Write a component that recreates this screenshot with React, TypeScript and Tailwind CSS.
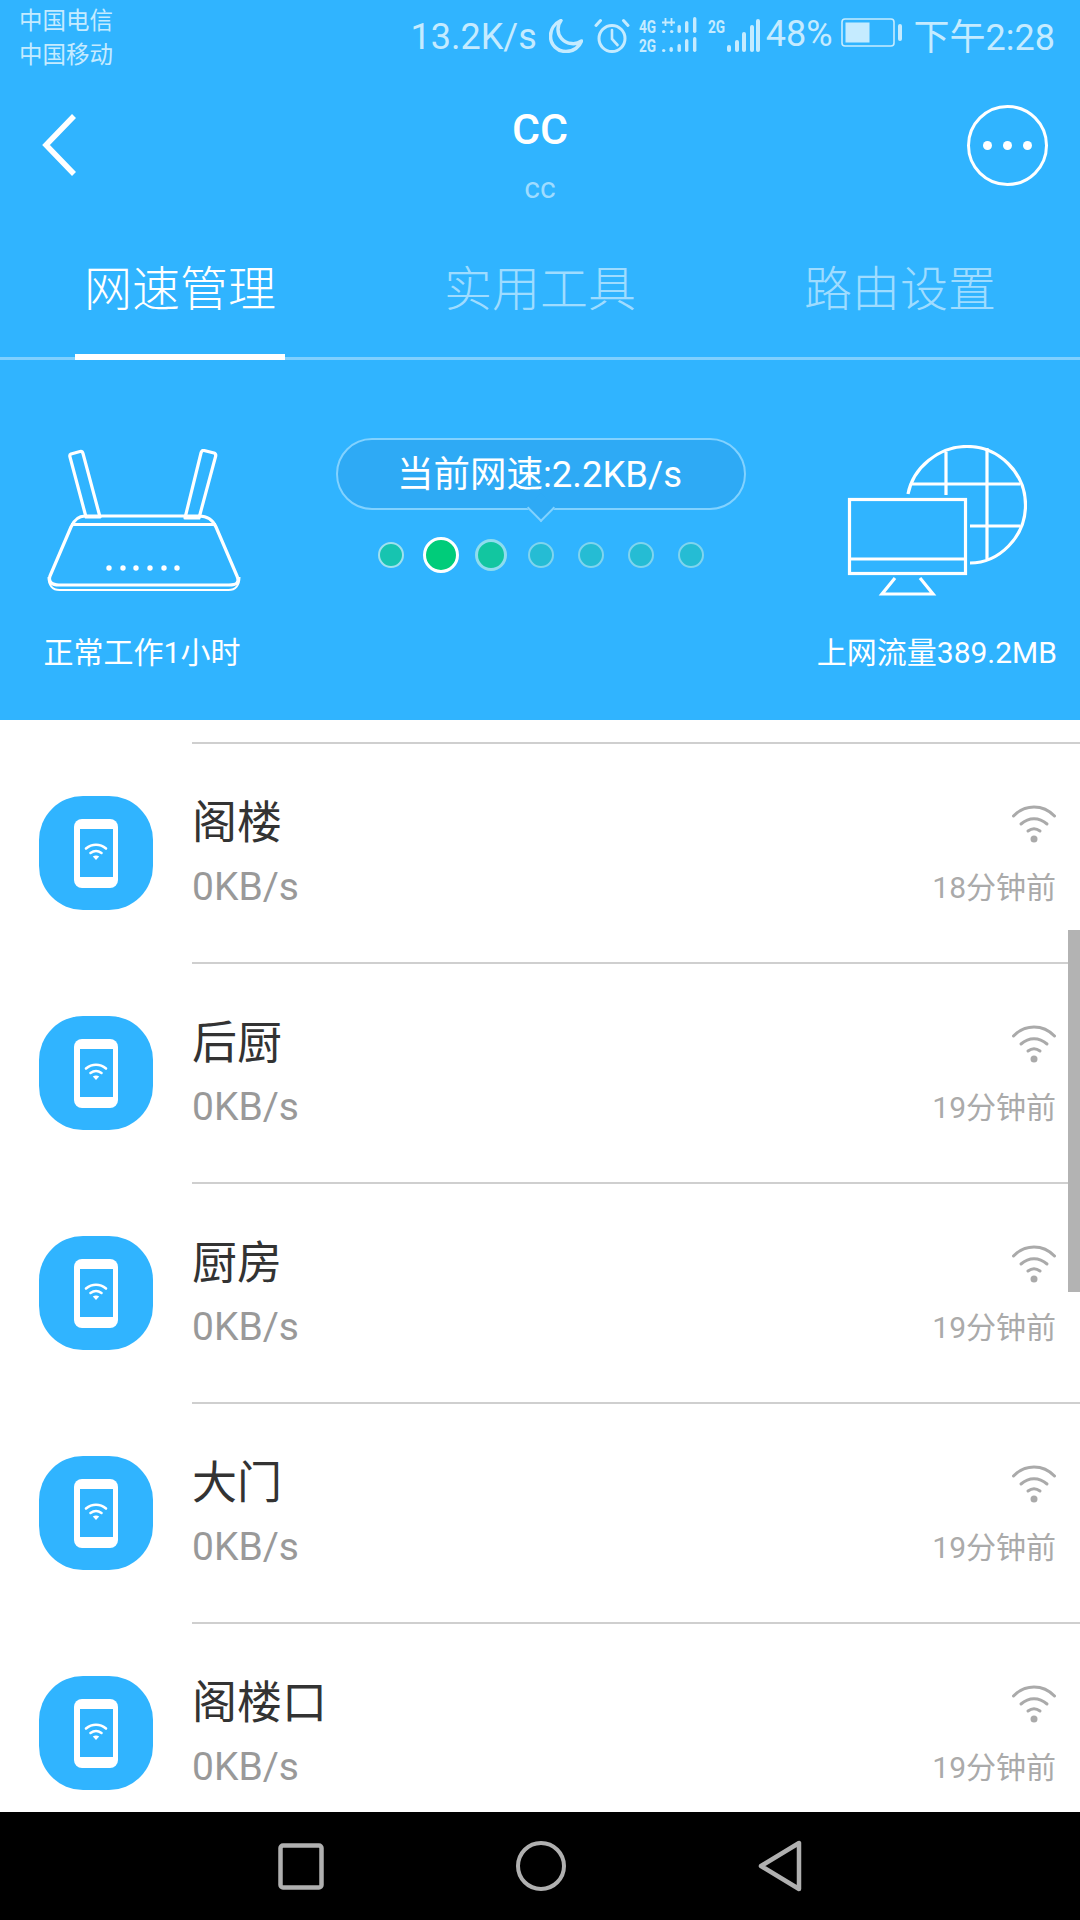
import React from "react";

const FONT = "font-['Roboto','Noto_Sans_CJK_SC',sans-serif]";

function Moon() {
  return (
    <svg width="34" height="34" viewBox="0 0 34 34" fill="none">
      <path d="M12 1.500C5.500 4.500 1.500 10.500 1.500 17c0 9 7 15.500 15.500 15.500 7.500 0 13.500-4.500 15.500-10.500-3 2.200-6.500 3-10 2.600C14 23.500 9 17 9 10.500 9 7 10 4 12 1.500Z" stroke="#c5ebff" strokeWidth="3.500" strokeLinejoin="round" />
    </svg>
  );
}

function Alarm() {
  return (
    <svg width="36" height="36" viewBox="0 0 36 36" fill="none" stroke="#c5ebff" strokeLinecap="round">
      <circle cx="18" cy="20.500" r="13" strokeWidth="3" />
      <path d="M18 12v9l5.500 6" strokeWidth="2.600" />
      <path d="M2 7.500 6.500 2.500M34 7.500 29.500 2.500" strokeWidth="3" />
    </svg>
  );
}

function Bar({ x, bottom, h, w = 3.400 }: { x: number; bottom: number; h: number; w?: number }) {
  return <rect x={x} y={bottom - h} width={w} height={h} rx={w / 2} fill="#c5ebff" />;
}

const netText = { fontFamily: "Roboto, sans-serif", fontWeight: 700, fontSize: 13, fill: "#c5ebff" };

function NetLabel({ y, children }: { y: number; children: string }) {
  return (
    <text transform={`translate(0 ${y}) scale(1.05 1.45)`} {...netText}>
      {children}
    </text>
  );
}

function DualNet() {
  return (
    <svg width="58" height="46" viewBox="0 -5 58 46">
      <NetLabel y={15}>4G</NetLabel>
      <NetLabel y={34}>2G</NetLabel>
      <path d="M23 4.500h13M26.500 0v8M32.500 0v8" stroke="#c5ebff" strokeWidth="1.800" fill="none" />
      <Bar x={23} bottom={15} h={3} />
      <Bar x={31} bottom={15} h={3} />
      <Bar x={38.500} bottom={15} h={8} />
      <Bar x={46} bottom={15} h={12} />
      <Bar x={54} bottom={15} h={16} />
      <Bar x={23} bottom={34} h={3} />
      <Bar x={30.500} bottom={34} h={5} />
      <Bar x={38.500} bottom={34} h={8} />
      <Bar x={46} bottom={34} h={13} />
      <Bar x={54} bottom={34} h={15} />
    </svg>
  );
}

function SingleNet() {
  return (
    <svg width="52" height="46" viewBox="0 -5 52 46">
      <NetLabel y={15}>2G</NetLabel>
      <Bar x={19} bottom={34} h={7} w={4} />
      <Bar x={27} bottom={34} h={12} w={4} />
      <Bar x={34} bottom={34} h={20} w={4} />
      <Bar x={42} bottom={34} h={27} w={4} />
      <Bar x={48} bottom={34} h={33} w={4} />
    </svg>
  );
}

function Battery() {
  return (
    <svg width="62" height="30" viewBox="0 0 62 30">
      <rect x="1" y="1" width="52" height="27" rx="3" fill="none" stroke="#c5ebff" strokeWidth="1.600" />
      <rect x="4.500" y="4.500" width="24" height="20" fill="#c5ebff" />
      <rect x="57" y="6" width="4" height="17" rx="2" fill="#c5ebff" />
    </svg>
  );
}

function Router() {
  return (
    <svg width="194" height="144" viewBox="0 0 194 144" fill="none" stroke="#fff" strokeWidth="3.200" strokeLinejoin="round">
      <path d="M24 5 33 2.500c1.500-.4 2.500.3 3 2L53 68H39L23 8c-.5-1.500 0-2.500 1-3Z" />
      <path d="M157 1.500 167 4c1.500.5 2 1.500 1.700 3L152 69H138L154 4c.4-1.600 1.500-2.900 3-2.500Z" />
      <path d="M38 67H152c8 0 14 4 17 11L190 127c3 7-1 9-8 9H12c-7 0-11-3-9-9L24 78c3-7 8-11 14-11Z" />
      <path d="M24 75.500H169" />
      <path d="M1.500 128c0 8 4 13 11 13h169c7 0 11-5 11-13" strokeWidth="2" />
      <g fill="#fff" stroke="none">
        {[62, 76, 89, 103, 117, 130].map((x) => (
          <circle key={x} cx={x} cy={119} r="2.700" />
        ))}
      </g>
    </svg>
  );
}

function GlobeMonitor() {
  return (
    <svg width="180" height="152" viewBox="0 0 180 152" fill="none" stroke="#fff" strokeWidth="3.200">
      <path d="M61 49C66 23 91 1.500 120 1.500c32 0 58.500 26.500 58.500 58.500S152 118 123 118" />
      <path d="M99 7v43M140 3v111M65 39h108M123 81h50" />
      <rect x="2.500" y="54.500" width="116" height="74" />
      <path d="M2.500 114h116" />
      <path d="M48 133 35 149h51L73 133" />
    </svg>
  );
}

function SmallWifi() {
  return (
    <svg width="24" height="18" viewBox="0 0 24 18" fill="none" stroke="#fff" strokeWidth="2.600" strokeLinecap="round">
      <path d="M2 5.500C8 .5 16 .5 22 5.500" />
      <path d="M6.500 10c3.500-2.500 7.500-2.500 11 0" />
      <path d="M12 17 8.800 13.500c2-1.300 4.400-1.300 6.400 0Z" fill="#fff" stroke="none" />
    </svg>
  );
}

function GreyWifi() {
  return (
    <svg width="44" height="38" viewBox="0 0 44 38" fill="none" stroke="#aaaaaa" strokeWidth="3" strokeLinecap="round">
      <path d="M1.500 11C13-1 31-1 42.500 11" />
      <path d="M9 19c8-7 18-7 26 0" />
      <path d="M16 26c4-3 8-3 12 0" />
      <circle cx="22" cy="34" r="3.500" fill="#aaaaaa" stroke="none" />
    </svg>
  );
}

const rows = [
  { name: "阁楼", time: "18分钟前" },
  { name: "后厨", time: "19分钟前" },
  { name: "厨房", time: "19分钟前" },
  { name: "大门", time: "19分钟前" },
  { name: "阁楼口", time: "19分钟前" },
];

function Row({ name, time }: { name: string; time: string }) {
  return (
    <div className="flex h-[220px] items-center shrink-0">
      <div className="ml-[39px] mt-[2px] w-[114px] h-[114px] rounded-[44px] bg-[#30b4ff] flex items-center justify-center shrink-0">
        <div className="w-[44px] h-[69px] rounded-[8px] bg-white flex items-center justify-center">
          <div className="w-[33px] h-[48px] bg-[#30b4ff] flex items-center justify-center pb-[3px]">
            <SmallWifi />
          </div>
        </div>
      </div>
      <div className="ml-[39px] flex-1 h-full border-t-2 border-[#cfcfcf] flex justify-between pr-[24px]">
        <div className="flex flex-col">
          <div className="text-[45px] leading-[60px] text-[#333333] mt-[50px]">{name}</div>
          <div className="text-[39px] leading-[46px] text-[#999999] mt-[10px]">0KB/s</div>
        </div>
        <div className="flex flex-col items-end">
          <div className="mt-[61px]"><GreyWifi /></div>
          <div className="text-[30px] leading-[40px] text-[#aaaaaa] mt-[25px]">{time}</div>
        </div>
      </div>
    </div>
  );
}

const dots = [
  "w-[26px] h-[26px] bg-[#17c4b0] border-2 border-[#9fe0ee]",
  "w-[36px] h-[36px] bg-[#00cc7a] border-[3px] border-white",
  "w-[32px] h-[32px] bg-[#12c6a0] border-[3px] border-[#8fdcee]",
  "w-[26px] h-[26px] bg-[#25bcd4] border-2 border-[#7fd4ee]",
  "w-[26px] h-[26px] bg-[#25bcd4] border-2 border-[#7fd4ee]",
  "w-[26px] h-[26px] bg-[#25bcd4] border-2 border-[#7fd4ee]",
  "w-[26px] h-[26px] bg-[#25bcd4] border-2 border-[#7fd4ee]",
];

export default function App() {
  return (
    <div className={`${FONT} relative w-[1080px] h-[1920px] overflow-hidden bg-white flex flex-col`}>
      <div className="h-[720px] bg-[#30b4ff] shrink-0 flex flex-col">
        {/* status bar */}
        <div className="h-[70px] flex justify-between text-[#c5ebff]">
          <div className="pl-[19px] pt-[4px] text-[23.500px] leading-[34px]">
            <div>中国电信</div>
            <div>中国移动</div>
          </div>
          <div className="flex items-center pr-[25px] pt-[2px]">
            <span className="text-[36px] mt-[2px]">13.2K/s</span>
            <span className="ml-[12px]"><Moon /></span>
            <span className="ml-[11px]"><Alarm /></span>
            <span className="ml-[9px]"><DualNet /></span>
            <span className="ml-[11px]"><SingleNet /></span>
            <span className="ml-[6px] text-[36px] -mt-[4px]">48%</span>
            <span className="ml-[8px] -mt-[6px]"><Battery /></span>
            <span className="ml-[11px] text-[36px] mt-[4px]">下午2:28</span>
          </div>
        </div>
        {/* header */}
        <div className="h-[150px] grid grid-cols-[1fr_auto_1fr] items-center pl-[42px] pr-[32px]">
          <svg width="34" height="62" viewBox="0 0 34 62" fill="none" stroke="#fff" strokeWidth="5.500">
            <path d="M32 2 4 31l28 29" />
          </svg>
          <div className="flex flex-col items-center -translate-x-[5px]">
            <div className="text-[43px] leading-[46px] font-medium text-white mt-[22px]">CC</div>
            <div className="text-[30px] leading-[36px] text-[#9fdcff] mt-[18px]">cc</div>
          </div>
          <div className="justify-self-end w-[81px] h-[81px] rounded-full border-[3px] border-white flex items-center justify-center gap-[11px]">
            <span className="w-[9px] h-[9px] rounded-full bg-white" />
            <span className="w-[9px] h-[9px] rounded-full bg-white" />
            <span className="w-[9px] h-[9px] rounded-full bg-white" />
          </div>
        </div>
        {/* tabs */}
        <div className="h-[140px] border-b-[3px] border-[#7fd0ff] grid grid-cols-3 relative">
          <div className="flex justify-center pt-[38px] text-[48px] leading-[64px] text-white font-light">网速管理</div>
          <div className="flex justify-center pt-[38px] text-[48px] leading-[64px] text-[#9fdcff] font-light">实用工具</div>
          <div className="flex justify-center pt-[38px] text-[48px] leading-[64px] text-[#9fdcff] font-light">路由设置</div>
          <div className="absolute left-[75px] -bottom-[3px] w-[210px] h-[6px] bg-white" />
        </div>
        {/* speed panel */}
        <div className="flex-1 flex justify-between relative">
          <div className="w-[290px] flex flex-col items-center">
            <div className="mt-[89px] ml-[-2px]"><Router /></div>
            <div className="mt-[40px] -ml-[6px] text-[30px] leading-[40px] text-white">正常工作1小时</div>
          </div>
          <div className="absolute left-[336px] top-[78px] w-[410px] flex flex-col items-center">
            <div className="relative w-[410px] h-[72px] rounded-full border-2 border-[#82d2ff] bg-[#2eaaf5] flex items-center justify-center text-[36.500px] text-white pt-[2px] pr-[3px]">
              当前网速:2.2KB/s
              <span className="absolute left-[193px] -bottom-[10px] w-[20px] h-[20px] rotate-45 bg-[#2eaaf5] border-r-2 border-b-2 border-[#82d2ff]" />
            </div>
            <div className="w-[350px] h-[40px] mt-[25px] -ml-[1px] grid grid-cols-7">
              {dots.map((d, i) => (
                <div key={i} className="flex items-center justify-center">
                  <span className={`rounded-full ${d}`} />
                </div>
              ))}
            </div>
          </div>
          <div className="flex flex-col items-end pr-[23px]">
            <div className="mt-[85px] mr-[30px]"><GlobeMonitor /></div>
            <div className="mt-[36px] text-[30px] leading-[40px] text-white">上网流量389.2MB</div>
          </div>
        </div>
      </div>

      {/* list */}
      <div className="flex-1 min-h-0 overflow-hidden pt-[22px]">
        {rows.map((r) => (
          <Row key={r.name} name={r.name} time={r.time} />
        ))}
      </div>

      {/* scrollbar */}
      <div className="absolute right-0 top-[930px] w-[12px] h-[362px] bg-[#b3b3b3]" />

      {/* nav */}
      <div className="h-[108px] bg-black shrink-0 flex items-center justify-center gap-[192px]">
        <svg width="46" height="47" viewBox="0 0 46 47" fill="none" stroke="#b0b0b0" strokeWidth="4.500">
          <rect x="2.500" y="2.500" width="41" height="42" rx="2.500" />
        </svg>
        <svg width="50" height="50" viewBox="0 0 50 50" fill="none" stroke="#b0b0b0" strokeWidth="4">
          <circle cx="25" cy="25" r="23" />
        </svg>
        <svg width="44" height="52" viewBox="0 0 44 52" fill="none" stroke="#b0b0b0" strokeWidth="4.500" strokeLinejoin="round">
          <path d="M41 3v46L3 26Z" />
        </svg>
      </div>
    </div>
  );
}
